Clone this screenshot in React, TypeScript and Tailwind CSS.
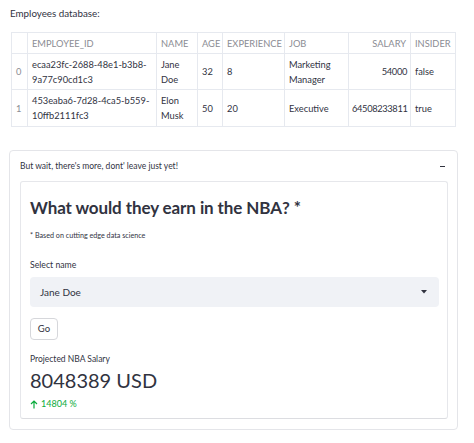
export default function App() {
  const rows = [
    {
      idx: "0",
      id: ["ecaa23fc-2688-48e1-b3b8-", "9a77c90cd1c3"],
      name: ["Jane", "Doe"],
      age: "32",
      exp: "8",
      job: ["Marketing", "Manager"],
      salary: "54000",
      insider: "false",
      h: "h-[36px]",
    },
    {
      idx: "1",
      id: ["453eaba6-7d28-4ca5-b559-", "10ffb2111fc3"],
      name: ["Elon", "Musk"],
      age: "50",
      exp: "20",
      job: ["Executive"],
      salary: "64508233811",
      insider: "true",
      h: "h-[37px]",
    },
  ];

  const cell = "border border-[#e6e9ef] px-[4px] leading-[15px] align-middle whitespace-nowrap";

  return (
    <div className="w-[474px] h-[443px] bg-white px-[9px] font-['Lato',sans-serif] text-[#31333f]">
      <p className="pt-[6px] pl-[1px] text-[9.8px] leading-[14px]">Employees database:</p>

      <table className="mt-[12px] ml-[2px] w-[444px] table-fixed border-collapse text-[9.3px]">
        <colgroup>
          <col className="w-[16px]" />
          <col className="w-[129px]" />
          <col className="w-[41px]" />
          <col className="w-[25px]" />
          <col className="w-[62px]" />
          <col className="w-[64px]" />
          <col className="w-[62px]" />
          <col className="w-[45px]" />
        </colgroup>
        <thead className="text-[#8b8c93]">
          <tr className="h-[21px]">
            <th className={cell}></th>
            <th className={`${cell} text-left font-normal`}>EMPLOYEE_ID</th>
            <th className={`${cell} text-left font-normal`}>NAME</th>
            <th className={`${cell} text-left font-normal`}>AGE</th>
            <th className={`${cell} text-left font-normal`}>EXPERIENCE</th>
            <th className={`${cell} text-left font-normal`}>JOB</th>
            <th className={`${cell} text-right font-normal`}>SALARY</th>
            <th className={`${cell} text-left font-normal`}>INSIDER</th>
          </tr>
        </thead>
        <tbody>
          {rows.map((r) => (
            <tr key={r.idx} className={r.h}>
              <td className={`${cell} text-[#8b8c93]`}>{r.idx}</td>
              <td className={cell}>
                {r.id[0]}
                <br />
                {r.id[1]}
              </td>
              <td className={cell}>
                {r.name[0]}
                <br />
                {r.name[1]}
              </td>
              <td className={cell}>{r.age}</td>
              <td className={cell}>{r.exp}</td>
              <td className={cell}>
                {r.job.map((j, i) => (
                  <div key={i}>{j}</div>
                ))}
              </td>
              <td className={`${cell} !px-[3px] text-right tracking-[-0.35px]`}>{r.salary}</td>
              <td className={cell}>{r.insider}</td>
            </tr>
          ))}
        </tbody>
      </table>

      <div className="mt-[23px] w-[449px] h-[280px] rounded-[4px] border border-[#e4e5e9] flex flex-col">
        <div className="h-[30px] flex items-center justify-between pl-[10px] pr-[12px] text-[8.5px]">
          <span>But wait, there's more, dont' leave just yet!</span>
          <span className="block w-[5px] h-[1px] bg-[#31333f]"></span>
        </div>

        <div className="ml-[10px] w-[428px] h-[238px] rounded-[3px] border border-[#e6e7eb] border-b-[#dcdde1] flex flex-col pl-[9px] pr-[8px]">
          <h3 className="mt-[14px] h-[24px] leading-[24px] text-[17px] font-bold tracking-[-0.1px]">
            What would they earn in the NBA? *
          </h3>
          <p className="mt-[10px] h-[12px] leading-[12px] text-[7.2px]">* Based on cutting edge data science</p>
          <p className="mt-[16px] h-[14px] leading-[14px] text-[8.7px]">Select name</p>
          <div className="mt-[5px] h-[30px] w-[409px] rounded-[4px] bg-[#f0f2f6] flex items-center justify-between pl-[10px] pr-[12px] text-[10px]">
            <span>Jane Doe</span>
            <svg width="6" height="4" viewBox="0 0 6 4">
              <path d="M0 0 L6 0 L3 3.5 Z" fill="#31333f" />
            </svg>
          </div>
          <button className="mt-[11px] h-[22px] w-[28px] rounded-[4px] border border-[#d6d7db] bg-white text-[9.5px] leading-none">
            Go
          </button>
          <p className="mt-[13px] h-[12px] leading-[12px] text-[8.5px]">Projected NBA Salary</p>
          <p className="mt-[1px] h-[28px] leading-[28px] text-[20px]">8048389 USD</p>
          <p className="mt-[3px] h-[14px] leading-[14px] text-[9px] text-[#09ab3b] flex items-center gap-[3px]">
            <svg width="8" height="9" viewBox="0 0 8 9" fill="none" stroke="#09ab3b" strokeWidth="1.2">
              <path d="M4 8.5 V1 M1 4 L4 1 L7 4" />
            </svg>
            <span>14804 %</span>
          </p>
        </div>
      </div>
    </div>
  );
}
